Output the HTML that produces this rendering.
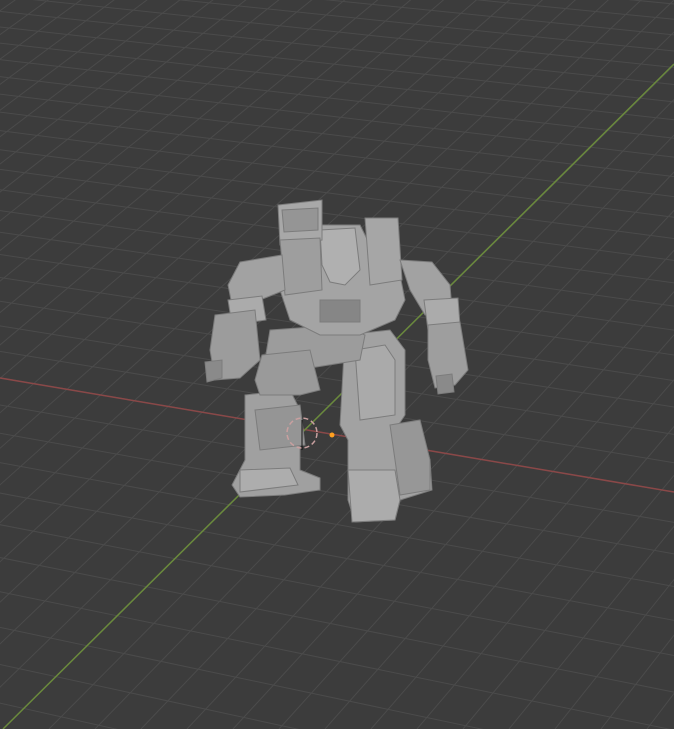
<!DOCTYPE html><html><head><style>html,body{margin:0;padding:0;background:#3c3c3c;width:674px;height:729px;overflow:hidden}svg{display:block}</style></head><body>
<svg id="s" width="674" height="729" viewBox="0 0 674 729" xmlns="http://www.w3.org/2000/svg">
<rect width="674" height="729" fill="#3c3c3c"/>
<g id="grid" stroke="#4b4b4b" stroke-width="1"></g>
<line x1="0" y1="378" x2="674" y2="492" stroke="#8a4848" stroke-width="1.5"/>
<line x1="3" y1="729" x2="674" y2="64" stroke="#6a8a3c" stroke-width="1.5"/>
<g stroke="#7c7c7c" stroke-width="1">
<polygon points="245,395 290,390 300,410 300,470 320,478 320,490 285,495 240,497 232,485 245,460" fill="#a0a0a0"/>
<polygon points="240,470 290,468 298,485 240,492" fill="#adadad"/>
<polygon points="255,410 300,405 305,445 260,450" fill="#959595"/>
<polygon points="345,335 390,330 405,350 405,415 395,430 420,425 430,460 432,490 400,500 395,520 355,522 348,500 348,440 340,425" fill="#a2a2a2"/>
<polygon points="348,470 395,470 400,500 395,520 352,522" fill="#acacac"/>
<polygon points="390,425 420,420 430,460 430,490 400,495" fill="#979797"/>
<polygon points="355,350 385,345 395,360 395,415 360,420" fill="#aaaaaa"/>
<polygon points="270,330 340,325 365,335 360,360 310,368 265,360" fill="#9c9c9c"/>
<polygon points="262,355 310,350 320,390 300,395 260,395 255,380" fill="#9a9a9a"/>
<polygon points="285,240 320,225 360,225 370,245 395,250 405,300 395,320 360,335 320,335 290,320 280,290" fill="#a4a4a4"/>
<polygon points="320,230 355,228 360,270 345,285 330,282 322,265" fill="#b0b0b0"/>
<polygon points="320,300 360,300 360,322 320,322" fill="#868686"/>
<polygon points="278,205 322,200 322,240 280,245" fill="#a8a8a8"/>
<polygon points="282,210 318,208 318,230 284,232" fill="#959595"/>
<polygon points="280,240 320,238 322,290 285,295" fill="#9e9e9e"/>
<polygon points="365,218 398,218 402,280 370,285" fill="#a6a6a6"/>
<polygon points="240,262 282,255 285,290 260,300 232,305 228,285" fill="#a2a2a2"/>
<polygon points="228,300 262,296 266,320 232,325" fill="#ababab"/>
<polygon points="215,315 255,310 260,360 240,378 215,380 210,350" fill="#9c9c9c"/>
<polygon points="205,362 222,360 222,378 207,382" fill="#8a8a8a"/>
<polygon points="400,260 432,262 450,285 452,310 425,315 410,290" fill="#a2a2a2"/>
<polygon points="424,300 458,298 460,325 428,330" fill="#ababab"/>
<polygon points="428,325 460,322 468,370 455,385 435,388 428,360" fill="#9e9e9e"/>
<polygon points="436,376 452,374 454,392 438,394" fill="#8a8a8a"/>
</g>
<circle cx="302" cy="433" r="15" fill="none" stroke="#c9a0a0" stroke-width="1.5" stroke-dasharray="5 3"/>
<line x1="302" y1="420" x2="302" y2="450" stroke="#111" stroke-width="1"/>
<circle cx="332" cy="435" r="2.5" fill="#ffa020"/>
</svg>
<script>
var g=document.getElementById('grid'),ns='http://www.w3.org/2000/svg';
function L(a,b,c,d){var l=document.createElementNS(ns,'line');l.setAttribute('x1',a);l.setAttribute('y1',b);l.setAttribute('x2',c);l.setAttribute('y2',d);g.insertBefore(l,g.firstChild);}
var vx=2600,vy=-1840;
for(var k=-60;k<60;k++){var bx=3+k*46;L(vx,vy,bx,729);}
var ux=-6000,uy=-640;
var H=-1200,C=96000,base=492;
var k0=C/(base-H);
for(var k=-40;k<40;k++){var d=k0+k;if(d<=0)continue;var y=H+C/d;if(y<-20||y>1400)continue;L(ux,uy,674,y);}
</script>
</body></html>
